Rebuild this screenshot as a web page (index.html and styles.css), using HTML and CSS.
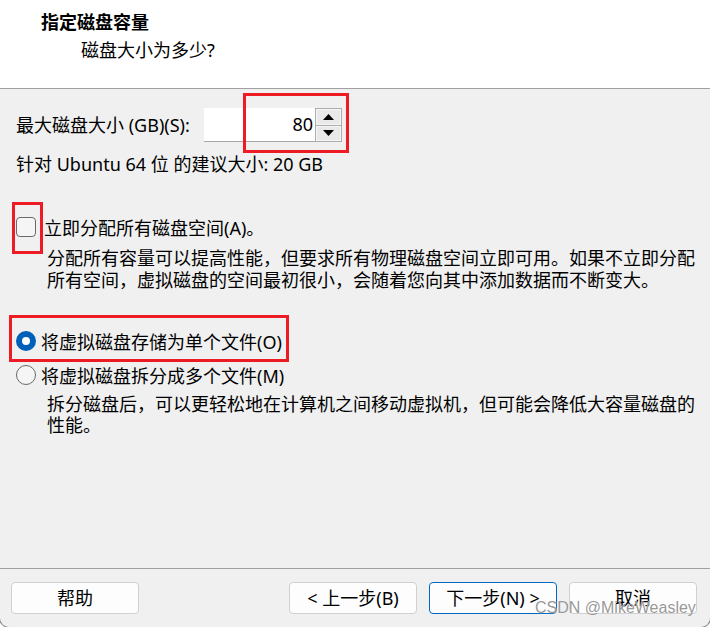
FILE: index.html
```html
<!DOCTYPE html>
<html lang="zh-CN">
<head>
<meta charset="utf-8">
<title>指定磁盘容量</title>
<link rel="stylesheet" href="styles.css">
</head>
<body>
<div class="window">
  <header class="head">
    <div class="title">指定磁盘容量</div>
    <div class="subtitle">磁盘大小为多少?</div>
  </header>
  <main class="content">
    <div class="size-row">
      <label class="size-label">最大磁盘大小 (GB)(S):</label>
      <div class="spin">
        <div class="spin-field">80</div>
        <div class="spin-buttons">
          <div class="spin-btn"><svg width="11" height="6" viewBox="0 0 11 6"><polygon points="5.5,0 11,6 0,6" fill="#000"/></svg></div>
          <div class="spin-btn"><svg width="11" height="6" viewBox="0 0 11 6"><polygon points="0,0 11,0 5.5,6" fill="#000"/></svg></div>
        </div>
      </div>
    </div>
    <div class="hint">针对 Ubuntu 64 位 的建议大小: 20 GB</div>
    <div class="option check-row"><span class="checkbox"></span><span>立即分配所有磁盘空间(A)。</span></div>
    <p class="desc desc-alloc">分配所有容量可以提高性能，但要求所有物理磁盘空间立即可用。如果不立即分配所有空间，虚拟磁盘的空间最初很小，会随着您向其中添加数据而不断变大。</p>
    <div class="radio-group">
      <div class="option radio-row"><span class="radio checked"></span><span>将虚拟磁盘存储为单个文件(O)</span></div>
      <div class="option radio-row"><span class="radio"></span><span>将虚拟磁盘拆分成多个文件(M)</span></div>
    </div>
    <p class="desc desc-split">拆分磁盘后，可以更轻松地在计算机之间移动虚拟机，但可能会降低大容量磁盘的性能。</p>
  </main>
  <footer class="foot">
    <button class="btn">帮助</button>
    <div class="nav">
      <button class="btn">&lt; 上一步(B)</button>
      <button class="btn btn-default">下一步(N) &gt;</button>
      <button class="btn">取消</button>
    </div>
  </footer>
  <div class="mark mark-size"></div>
  <div class="mark mark-check"></div>
  <div class="mark mark-radio"></div>
  <div class="watermark">CSDN @MikeWeasley</div>
</div>
</body>
</html>
```
FILE: styles.css
```css
html, body {
  margin: 0;
  padding: 0;
  background: #ffffff;
}
body {
  font-family: "Noto Sans", "Noto Sans CJK SC", sans-serif;
  font-size: 18px;
  color: #000;
  overflow: hidden;
}
.window {
  position: relative;
  width: 710px;
  height: 627px;
  background: #f0f0f0;
  display: flex;
  flex-direction: column;
  border-radius: 0 0 9px 9px;
  box-shadow: 0 0 0 1px #8f8f8f;
  overflow: hidden;
}
.head {
  height: 89px;
  box-sizing: border-box;
  background: #ffffff;
  border-bottom: 1px solid #a0a0a0;
  padding-top: 11px;
}
.title {
  padding-left: 41px;
  font-weight: bold;
  line-height: 22px;
}
.subtitle {
  padding-left: 81px;
  margin-top: 6px;
  line-height: 22px;
}
.content {
  flex: 1;
  padding-left: 16px;
}
.size-row {
  margin-top: 19px;
  height: 34px;
  display: flex;
  align-items: center;
}
.size-label {
  width: 188px;
  line-height: 22px;
}
.spin {
  display: flex;
  height: 34px;
}
.spin-field {
  width: 111px;
  height: 34px;
  box-sizing: border-box;
  background: #ffffff;
  border-bottom: 1px solid #a6a6a6;
  text-align: right;
  padding-right: 2px;
  line-height: 33px;
}
.spin-buttons {
  width: 27px;
  display: flex;
  flex-direction: column;
}
.spin-btn {
  flex: 1;
  box-sizing: border-box;
  border: 1px solid #adadad;
  background: #e9e9e9;
  box-shadow: inset 0 0 0 1px #f6f6f6;
  display: flex;
  align-items: center;
  justify-content: center;
}
.spin-btn + .spin-btn {
  border-top: none;
}
.hint {
  margin-top: 11px;
  line-height: 22px;
}
.option {
  display: flex;
  align-items: center;
}
.check-row {
  margin-top: 41px;
  height: 22px;
  gap: 8px;
}
.checkbox {
  width: 20px;
  height: 20px;
  box-sizing: border-box;
  border: 1px solid #6a6a6a;
  border-radius: 4px;
  background: #f5f5f5;
  flex: none;
}
.desc {
  margin: 0 0 0 31px;
  width: 650px;
}
.desc-alloc {
  margin-top: 9px;
  line-height: 22px;
}
.radio-group {
  margin-top: 33px;
}
.radio-row {
  height: 34px;
  gap: 5px;
}
.radio {
  width: 20px;
  height: 20px;
  box-sizing: border-box;
  border-radius: 50%;
  border: 1px solid #6a6a6a;
  background: #f5f5f5;
  flex: none;
}
.radio.checked {
  border: 6px solid #005fb8;
  background: #ffffff;
}
.desc-split {
  margin-top: 2px;
  line-height: 21px;
}
.foot {
  height: 59px;
  box-sizing: border-box;
  border-top: 1px solid #a0a0a0;
  padding: 13px 13px 0 11px;
  display: flex;
  justify-content: space-between;
  align-items: flex-start;
}
.nav {
  display: flex;
  gap: 12px;
}
.btn {
  width: 128px;
  height: 32px;
  box-sizing: border-box;
  border: 1px solid #d0d0d0;
  border-radius: 4px;
  background: #fdfdfd;
  font-family: "Noto Sans", "Noto Sans CJK SC", sans-serif;
  font-size: 18px;
  line-height: 28px;
  color: #000;
  padding: 0;
}
.btn-default {
  border-color: #0067c0;
}
.mark {
  position: absolute;
  box-sizing: border-box;
  border: 3px solid #ed1c24;
}
.mark-size {
  left: 243px;
  top: 93px;
  width: 106px;
  height: 60px;
}
.mark-check {
  left: 12px;
  top: 202px;
  width: 31px;
  height: 52px;
}
.mark-radio {
  left: 9px;
  top: 315px;
  width: 280px;
  height: 47px;
}
.watermark {
  position: absolute;
  left: 535px;
  top: 598px;
  font-family: "Liberation Sans", Arial, sans-serif;
  font-size: 16px;
  line-height: 20px;
  color: rgba(125, 125, 125, 0.8);
  text-shadow: 0 0 1px #ffffff;
  white-space: nowrap;
}
```
